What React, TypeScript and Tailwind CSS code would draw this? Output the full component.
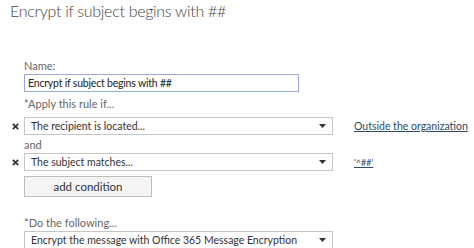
import React from "react";

const font = { fontFamily: 'Lato, "Open Sans", sans-serif' };

function Arrow() {
  return (
    <svg width="7" height="4" viewBox="0 0 7 4" className="shrink-0">
      <path d="M0 0 H7 L3.5 4 Z" fill="#333" />
    </svg>
  );
}

function Select({ text }: { text: string }) {
  return (
    <div className="flex h-[18px] w-[309px] shrink-0 items-center justify-between border border-[#c6c6c6] bg-white pl-[6px] pr-[6px]">
      <span className="whitespace-nowrap text-[10.5px] leading-none text-[#333]">{text}</span>
      <Arrow />
    </div>
  );
}

function XIcon() {
  return (
    <svg width="7" height="7" viewBox="0 0 7 7" className="shrink-0">
      <path d="M0.8 0.8 L6.2 6.2 M6.2 0.8 L0.8 6.2" stroke="#333" strokeWidth="1.7" />
    </svg>
  );
}

export default function App() {
  return (
    <div className="h-[248px] w-[474px] overflow-hidden bg-white" style={font}>
      <div className="pl-[10px] pt-0 text-[16px] font-light leading-[22px] tracking-[-0.3px] text-[#444]">
        Encrypt if subject begins with ##
      </div>
      <div className="pl-[24px] pt-[37px]">
        <div className="text-[11px] leading-[14px] text-[#666]">Name:</div>
        <div className="mt-[1px] flex h-[18px] w-[275px] items-center border border-[#9aa8d8] pl-[3px]">
          <span className="whitespace-nowrap text-[10.5px] leading-none tracking-[-0.2px] text-[#222]">Encrypt if subject begins with ##</span>
        </div>
        <div className="mt-[5px] text-[11px] leading-[14px] text-[#666]">*Apply this rule if...</div>
      </div>
      <div className="mt-[6px] flex items-center">
        <div className="flex w-[24px] justify-center pl-[6px]">
          <XIcon />
        </div>
        <Select text="The recipient is located..." />
        <a className="ml-[21px] whitespace-nowrap text-[10.5px] leading-none text-[#2d4a6a] underline">Outside the organization</a>
      </div>
      <div className="pl-[24px] pt-[3px] text-[11px] leading-[14px] text-[#666]">and</div>
      <div className="mt-[1px] flex items-center">
        <div className="flex w-[24px] justify-center pl-[6px]">
          <XIcon />
        </div>
        <Select text="The subject matches..." />
        <a className="ml-[21px] whitespace-nowrap text-[9px] leading-none text-[#2d4a6a] underline">'^##'</a>
      </div>
      <div className="pl-[24px] pt-[5px]">
        <div className="flex h-[21px] w-[128px] items-center justify-center border border-[#bdbdbd] bg-[#f4f4f4] text-[11.5px] text-[#333]">
          add condition
        </div>
        <div className="mt-[19px] text-[11px] leading-[14px] text-[#666]">*Do the following...</div>
        <div className="mt-[1px]">
          <Select text="Encrypt the message with Office 365 Message Encryption" />
        </div>
      </div>
    </div>
  );
}
